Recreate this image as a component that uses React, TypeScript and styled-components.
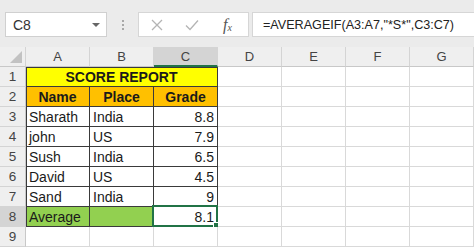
import React from "react";
import styled, { createGlobalStyle } from "styled-components";

const GlobalStyle = createGlobalStyle`
  html, body {
    margin: 0;
    padding: 0;
    background: #ffffff;
    overflow: hidden;
  }
  body {
    font-family: "Liberation Sans", Arial, sans-serif;
  }
`;

const Page = styled.div`
  width: 474px;
  height: 248px;
  overflow: hidden;
  background: #ffffff;
`;

const Toolbar = styled.div`
  height: 47px;
  background: #ebebeb;
  display: flex;
  align-items: flex-start;
  padding: 12px 0 0 5px;
  box-sizing: border-box;
`;

const NameBox = styled.div`
  width: 102px;
  height: 25px;
  box-sizing: border-box;
  background: #ffffff;
  border: 1px solid #d0d0d0;
  display: flex;
  align-items: center;
  justify-content: space-between;
  padding: 0 6px 0 7px;
  font-size: 14px;
  color: #333;
`;

const DropArrow = styled.span`
  width: 0;
  height: 0;
  border-left: 4px solid transparent;
  border-right: 4px solid transparent;
  border-top: 4px solid #666;
`;

const Grip = styled.div`
  width: 31px;
  height: 25px;
  display: flex;
  flex-direction: column;
  align-items: center;
  justify-content: center;
  gap: 2px;

  span {
    width: 2px;
    height: 2px;
    background: #a8a8a8;
  }
`;

const IconBox = styled.div`
  width: 111px;
  height: 25px;
  box-sizing: border-box;
  background: #ffffff;
  border: 1px solid #d6d6d6;
  display: flex;
  align-items: center;
  padding-left: 12px;
  gap: 22px;
`;

const Fx = styled.span`
  font-family: "Liberation Serif", "Times New Roman", serif;
  font-style: italic;
  font-size: 16px;
  color: #555;
  margin-left: 2px;

  sub {
    font-size: 10px;
    vertical-align: -1px;
  }
`;

const FormulaBox = styled.div`
  flex: 1;
  height: 25px;
  margin-left: 3px;
  box-sizing: border-box;
  background: #ffffff;
  border: 1px solid #d6d6d6;
  border-right: none;
  display: flex;
  align-items: center;
  padding-left: 10px;
  font-size: 12.6px;
  color: #222;
  white-space: nowrap;
`;

const Sheet = styled.div`
  display: grid;
  grid-template-columns: 26px repeat(7, 64px);
  grid-template-rows: 20px;
  grid-auto-rows: 20px;
`;

const Corner = styled.div`
  background: #efefef;
  border-right: 1px solid #d4d4d4;
  border-bottom: 1px solid #c8c8c8;
  box-sizing: border-box;
  position: relative;

  &::after {
    content: "";
    position: absolute;
    right: 3px;
    bottom: 3px;
    width: 0;
    height: 0;
    border-left: 12px solid transparent;
    border-bottom: 12px solid #c2c2c2;
  }
`;

const ColHead = styled.div<{ $active?: boolean }>`
  box-sizing: border-box;
  background: ${(p) => (p.$active ? "#d4d4d4" : "#efefef")};
  border-right: 1px solid #d4d4d4;
  border-bottom: ${(p) => (p.$active ? "2px solid #217346" : "1px solid #c8c8c8")};
  display: flex;
  align-items: center;
  justify-content: center;
  font-size: 13px;
  color: #444;
`;

const RowHead = styled.div<{ $active?: boolean }>`
  box-sizing: border-box;
  background: ${(p) => (p.$active ? "#d4d4d4" : "#efefef")};
  border-right: 1px solid #c8c8c8;
  border-bottom: 1px solid #d4d4d4;
  display: flex;
  align-items: center;
  justify-content: center;
  font-size: 13.5px;
  color: #444;
`;

const Cell = styled.div<{
  $fill?: string;
  $align?: "left" | "center" | "right";
  $bold?: boolean;
  $span?: number;
  $boxed?: boolean;
  $first?: boolean;
  $top?: boolean;
}>`
  box-sizing: border-box;
  position: relative;
  grid-column: span ${(p) => p.$span || 1};
  background: ${(p) => p.$fill || "#ffffff"};
  border-right: 1px solid ${(p) => (p.$boxed ? "#3a3a3a" : "#d9d9d9")};
  border-bottom: 1px solid ${(p) => (p.$boxed ? "#3a3a3a" : "#d9d9d9")};
  box-shadow: ${(p) =>
    [p.$first ? "inset 1px 0 0 #3a3a3a" : "", p.$top ? "inset 0 1px 0 #3a3a3a" : ""]
      .filter(Boolean)
      .join(", ") || "none"};
  display: flex;
  align-items: center;
  justify-content: ${(p) =>
    p.$align === "center" ? "center" : p.$align === "right" ? "flex-end" : "flex-start"};
  padding: 0 3px;
  font-size: 14px;
  font-weight: ${(p) => (p.$bold ? 700 : 400)};
  color: #1a1a1a;
  white-space: nowrap;
  overflow: visible;
`;

const Selection = styled.div`
  position: absolute;
  left: -2px;
  top: -2px;
  right: -1px;
  bottom: -1px;
  border: 2px solid #217346;
  pointer-events: none;

  &::after {
    content: "";
    position: absolute;
    right: -4px;
    bottom: -4px;
    width: 5px;
    height: 5px;
    background: #217346;
    border: 1px solid #ffffff;
  }
`;

const Cross = () => (
  <svg width="12" height="12" viewBox="0 0 12 12">
    <path d="M1 1 L11 11 M11 1 L1 11" stroke="#b4b4b4" strokeWidth="1.3" fill="none" />
  </svg>
);

const Check = () => (
  <svg width="14" height="12" viewBox="0 0 14 12">
    <path d="M1 6.5 L5 10.5 L13 1.5" stroke="#b4b4b4" strokeWidth="1.3" fill="none" />
  </svg>
);

type Row = {
  name: string;
  place: string;
  grade: string;
};

const rows: Row[] = [
  { name: "Sharath", place: "India", grade: "8.8" },
  { name: "john", place: "US", grade: "7.9" },
  { name: "Sush", place: "India", grade: "6.5" },
  { name: "David", place: "US", grade: "4.5" },
  { name: "Sand", place: "India", grade: "9" },
];

const columns = ["A", "B", "C", "D", "E", "F", "G"];

const Blanks = () => (
  <>
    <Cell />
    <Cell />
    <Cell />
    <Cell />
  </>
);

const App = () => {
  return (
    <Page>
      <GlobalStyle />
      <Toolbar>
        <NameBox>
          C8
          <DropArrow />
        </NameBox>
        <Grip>
          <span />
          <span />
          <span />
        </Grip>
        <IconBox>
          <Cross />
          <Check />
          <Fx>
            f<sub>x</sub>
          </Fx>
        </IconBox>
        <FormulaBox>=AVERAGEIF(A3:A7,"*S*",C3:C7)</FormulaBox>
      </Toolbar>

      <Sheet>
        <Corner />
        {columns.map((c) => (
          <ColHead key={c} $active={c === "C"}>
            {c}
          </ColHead>
        ))}

        <RowHead>1</RowHead>
        <Cell $span={3} $fill="#ffff00" $align="center" $bold $boxed $first $top>
          SCORE REPORT
        </Cell>
        <Blanks />

        <RowHead>2</RowHead>
        <Cell $fill="#ffc000" $align="center" $bold $boxed $first>Name</Cell>
        <Cell $fill="#ffc000" $align="center" $bold $boxed>Place</Cell>
        <Cell $fill="#ffc000" $align="center" $bold $boxed>Grade</Cell>
        <Blanks />

        {rows.map((r, i) => (
          <React.Fragment key={r.name}>
            <RowHead>{i + 3}</RowHead>
            <Cell $boxed $first>{r.name}</Cell>
            <Cell $boxed>{r.place}</Cell>
            <Cell $boxed $align="right">{r.grade}</Cell>
            <Blanks />
          </React.Fragment>
        ))}

        <RowHead $active>8</RowHead>
        <Cell $fill="#92d050" $boxed $first>Average</Cell>
        <Cell $fill="#92d050" $boxed />
        <Cell $boxed $align="right">
          8.1
          <Selection />
        </Cell>
        <Blanks />

        <RowHead>9</RowHead>
        <Cell />
        <Cell />
        <Cell />
        <Blanks />
      </Sheet>
    </Page>
  );
};

export default App;
